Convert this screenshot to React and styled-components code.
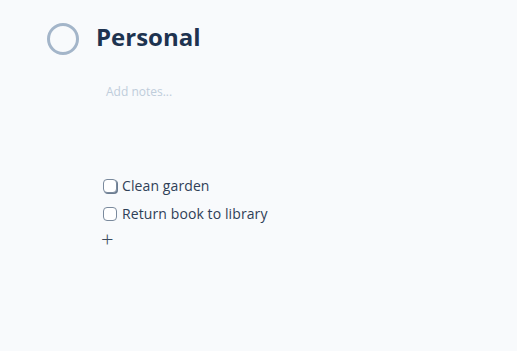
import React, { useState } from "react";
import styled, { createGlobalStyle } from "styled-components";

const GlobalStyle = createGlobalStyle`
	html, body {
		margin: 0;
		padding: 0;
		background: #f8fafc;
	}
	body {
		font-family: "Open Sans", "Noto Sans", sans-serif;
	}
`;

// 할 일 목록
const initialTodos = [
	{ id: 1, title: "Clean garden", done: false, hover: true },
	{ id: 2, title: "Return book to library", done: false },
];

const App = () => {
	const [todos] = useState(initialTodos);

	return (
		<S.Page>
			<GlobalStyle />
			<S.Header>
				<S.Ring />
				<S.Title>Personal</S.Title>
			</S.Header>
			<S.Notes>Add notes...</S.Notes>
			<S.List>
				{todos.map((todo) => (
					<S.Item key={todo.id}>
						<S.Check $hover={todo.hover} />
						<S.Label>{todo.title}</S.Label>
					</S.Item>
				))}
				<S.Add>+</S.Add>
			</S.List>
		</S.Page>
	);
};

export default App;

const Page = styled.div`
	width: 517px;
	height: 351px;
	background: #f8fafc;
	padding: 23px 0 0 47px;
	box-sizing: border-box;
`;

const Header = styled.div`
	display: flex;
	align-items: flex-start;
	gap: 17px;
	height: 32px;
`;

const Ring = styled.div`
	width: 32px;
	height: 32px;
	border-radius: 50%;
	border: 3px solid #a3b5c9;
	box-sizing: border-box;
`;

const Title = styled.h1`
	margin: -2px 0 0;
	font-size: 24px;
	font-weight: 700;
	color: #1e3350;
	line-height: 32px;
`;

const Notes = styled.div`
	margin: 29px 0 0 59px;
	font-size: 12px;
	color: #bfcddb;
	line-height: 16px;
`;

const List = styled.div`
	margin: 72px 0 0 56px;
	display: flex;
	flex-direction: column;
`;

const Item = styled.div`
	display: flex;
	align-items: center;
	gap: 5px;
	height: 28px;
`;

const Check = styled.span`
	width: 14px;
	height: 14px;
	border: 1px solid #7a8a9d;
	border-radius: 4px;
	box-sizing: border-box;
	background: #fff;
	box-shadow: ${(p) => (p.$hover ? "1px 1px 0 0 #6b7c90" : "none")};
`;

const Label = styled.span`
	font-size: 14px;
	color: #2f4057;
	line-height: 20px;
	letter-spacing: 0.1px;
`;

const Add = styled.div`
	font-size: 22px;
	font-weight: 300;
	color: #3a4a5e;
	line-height: 24px;
	margin-left: -2px;
	margin-top: -2px;
`;

const S = {
	Page,
	Header,
	Ring,
	Title,
	Notes,
	List,
	Item,
	Check,
	Label,
	Add,
};
